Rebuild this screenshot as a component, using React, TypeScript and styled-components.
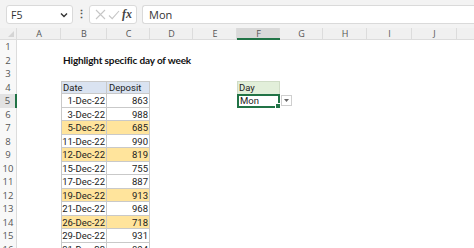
import React from 'react';
import styled, {createGlobalStyle} from 'styled-components';

const colors = {
    chrome: '#f3f3f3',
    boxBorder: '#dadada',
    headerBg: '#f0f0f0',
    headerText: '#555555',
    gridLine: '#dcdcdc',
    tableLine: '#c9c9c9',
    tableHead: '#dae3f1',
    highlight: '#ffe49c',
    dayHead: '#e2efda',
    green: '#217346',
    text: '#222222',
};

const GlobalStyle = createGlobalStyle`
  html, body {
    margin: 0;
    padding: 0;
    background: #ffffff;
  }
  body {
    font-family: "Roboto", "Liberation Sans", sans-serif;
    color: ${colors.text};
  }
`;

// the last column is only the start of K, which is cut off by the window
const columns = ['A', 'B', 'C', 'D', 'E', 'F', 'G', 'H', 'I', 'J', ''];
const colWidths = [44, 46, 43, 43, 44, 43, 43, 44, 45, 45, 60];

interface Deposit {
    date: string
    amount: number
    monday?: boolean
}

const deposits: Deposit[] = [
    {date: '1-Dec-22', amount: 863},
    {date: '3-Dec-22', amount: 988},
    {date: '5-Dec-22', amount: 685, monday: true},
    {date: '11-Dec-22', amount: 990},
    {date: '12-Dec-22', amount: 819, monday: true},
    {date: '15-Dec-22', amount: 755},
    {date: '17-Dec-22', amount: 887},
    {date: '19-Dec-22', amount: 913, monday: true},
    {date: '21-Dec-22', amount: 968},
    {date: '26-Dec-22', amount: 718, monday: true},
    {date: '29-Dec-22', amount: 931},
    {date: '31-Dec-22', amount: 804},
];

const ROW_COUNT = 16;

export default function App() {
    const rows = Array.from({length: ROW_COUNT}, (_, i) => i + 1);

    const renderCell = (row: number, colIndex: number) => {
        const key = `${row}-${colIndex}`;
        const col = columns[colIndex];

        if (row === 2 && col === 'B') {
            return <Cell key={key}><Title>Highlight specific day of week</Title></Cell>;
        }
        if (row === 4 && col === 'B') {
            return <TableCell key={key} head first>Date</TableCell>;
        }
        if (row === 4 && col === 'C') {
            return <TableCell key={key} head>Deposit</TableCell>;
        }
        if (row >= 5 && (col === 'B' || col === 'C')) {
            const d = deposits[row - 5];
            return (
                <TableCell key={key} first={col === 'B'} right highlight={d.monday}>
                    {col === 'B' ? d.date : d.amount}
                </TableCell>
            );
        }
        if (row === 4 && col === 'F') {
            return <DayHead key={key}>Day</DayHead>;
        }
        if (row === 5 && col === 'F') {
            return (
                <ActiveCell key={key}>
                    Mon
                    <FillHandle/>
                    <DropButton>
                        <svg width="5" height="3" viewBox="0 0 5 3"><path d="M0 0h5L2.5 3z" fill="#666"/></svg>
                    </DropButton>
                </ActiveCell>
            );
        }
        return <Cell key={key}/>;
    };

    return (
        <>
            <GlobalStyle/>
            <Window>
                <FormulaBar>
                    <NameBox>
                        <span>F5</span>
                        <svg width="8" height="6" viewBox="0 0 8 6">
                            <path d="M1 1.5l3 3 3-3" stroke="#333" strokeWidth="1.4" fill="none"/>
                        </svg>
                    </NameBox>
                    <Grip>⋮</Grip>
                    <FxBox>
                        <svg width="11" height="11" viewBox="0 0 11 11">
                            <path d="M1 1l9 9M10 1l-9 9" stroke="#c6c6c6" strokeWidth="1.1"/>
                        </svg>
                        <svg width="12" height="10" viewBox="0 0 12 10">
                            <path d="M1 5.5l3.2 3.2L11 1" stroke="#c6c6c6" strokeWidth="1.1" fill="none"/>
                        </svg>
                        <Fx>fx</Fx>
                    </FxBox>
                    <FormulaInput>Mon</FormulaInput>
                </FormulaBar>
                <Sheet>
                    <Corner/>
                    {columns.map((c, i) => (
                        <ColHeader key={i} active={c === 'F'} last={i === columns.length - 1}>{c}</ColHeader>
                    ))}
                    {rows.map(row => (
                        <React.Fragment key={row}>
                            <RowHeader active={row === 5}>{row}</RowHeader>
                            {columns.map((_, ci) => renderCell(row, ci))}
                        </React.Fragment>
                    ))}
                </Sheet>
            </Window>
        </>
    );
}

const Window = styled.div`
  width: 474px;
  height: 248px;
  overflow: hidden;
  background: #ffffff;
  display: flex;
  flex-direction: column;
`;

const FormulaBar = styled.div`
  height: 28px;
  box-sizing: border-box;
  padding: 5px 0 4px 6px;
  background: ${colors.chrome};
  display: flex;
  align-items: stretch;
  flex-shrink: 0;
`;

const BoxBase = styled.div`
  background: #ffffff;
  border: 1px solid ${colors.boxBorder};
  border-radius: 3px;
  box-sizing: border-box;
  display: flex;
  align-items: center;
  font-family: "Open Sans", "Liberation Sans", sans-serif;
  font-size: 10.5px;
  color: #333;
`;

const NameBox = styled(BoxBase)`
  width: 67px;
  padding: 0 4px 0 4px;
  justify-content: space-between;
`;

const Grip = styled.div`
  width: 16px;
  display: flex;
  align-items: center;
  justify-content: center;
  font-size: 11px;
  font-weight: bold;
  color: #555;
`;

const FxBox = styled(BoxBase)`
  width: 48px;
  padding: 0 4px 0 5px;
  justify-content: space-between;
`;

const Fx = styled.span`
  font-family: "Liberation Serif", serif;
  font-style: italic;
  font-weight: bold;
  font-size: 12px;
  color: #444;
`;

const FormulaInput = styled(BoxBase)`
  flex: 1;
  margin-left: 5px;
  padding-left: 6px;
  border-right: none;
  border-radius: 3px 0 0 3px;
  font-size: 11px;
`;

const Sheet = styled.div`
  display: grid;
  grid-template-columns: 17px ${colWidths.map(w => `${w}px`).join(' ')};
  grid-template-rows: 12px repeat(${ROW_COUNT}, 13.5px);
  font-family: "Roboto", "Liberation Sans", sans-serif;
  font-size: 9.5px;
  line-height: 13px;
`;

const Corner = styled.div`
  background: ${colors.headerBg};
  border-right: 1px solid ${colors.gridLine};
  border-bottom: 1px solid ${colors.gridLine};
  position: relative;
  &::after {
    content: '';
    position: absolute;
    right: 2px;
    bottom: 2px;
    border-left: 6px solid transparent;
    border-bottom: 6px solid #d4d4d4;
  }
`;

interface HeaderProps {
    active?: boolean
    last?: boolean
}

const ColHeader = styled.div<HeaderProps>`
  background: ${p => p.active ? '#d9d9d9' : colors.headerBg};
  border-bottom: ${p => p.active ? `2px solid ${colors.green}` : `1px solid ${colors.gridLine}`};
  box-shadow: ${p => p.last ? 'none' : `inset -1px 0 0 ${colors.gridLine}`};
  box-sizing: border-box;
  display: flex;
  align-items: center;
  justify-content: center;
  font-family: "Open Sans", "Liberation Sans", sans-serif;
  font-size: 9px;
  color: ${colors.headerText};
`;

const RowHeader = styled.div<HeaderProps>`
  background: ${p => p.active ? '#e2e2e2' : '#f8f8f8'};
  border-right: ${p => p.active ? `2px solid ${colors.green}` : `1px solid ${colors.gridLine}`};
  box-sizing: border-box;
  display: flex;
  align-items: center;
  justify-content: center;
  font-family: "Open Sans", "Liberation Sans", sans-serif;
  font-size: 9.5px;
  color: ${colors.headerText};
`;

const Cell = styled.div`
  position: relative;
  white-space: nowrap;
  display: flex;
  align-items: center;
  padding: 0 2px;
  min-width: 0;
`;

const Title = styled.span`
  font-family: "Lato", "Liberation Sans", sans-serif;
  font-weight: bold;
  font-size: 10px;
  letter-spacing: -0.15px;
  color: #111;
`;

interface TableCellProps {
    head?: boolean
    first?: boolean
    right?: boolean
    highlight?: boolean
}

const TableCell = styled(Cell)<TableCellProps>`
  background: ${p => p.head ? colors.tableHead : p.highlight ? colors.highlight : '#ffffff'};
  justify-content: ${p => p.right ? 'flex-end' : 'flex-start'};
  box-shadow: inset -1px -1px 0 ${colors.tableLine}
    ${p => p.first ? `, inset 1px 0 0 ${colors.tableLine}` : ''}
    ${p => p.head ? `, inset 0 1px 0 ${colors.tableLine}` : ''};
  padding: 0 2px 0 2px;
`;

const DayHead = styled(Cell)`
  background: ${colors.dayHead};
  box-shadow: inset -1px 0 0 #cfdcc6, inset 0 1px 0 #cfdcc6, inset 1px 0 0 #cfdcc6;
`;

const ActiveCell = styled(Cell)`
  border: 2px solid ${colors.green};
  box-sizing: border-box;
  padding: 0 1px;
`;

const FillHandle = styled.span`
  position: absolute;
  right: -3px;
  bottom: -3px;
  width: 4px;
  height: 4px;
  background: ${colors.green};
  border: 1px solid #ffffff;
`;

const DropButton = styled.span`
  position: absolute;
  left: calc(100% + 3px);
  top: -1px;
  width: 11px;
  height: 11px;
  box-sizing: border-box;
  border: 1px solid #cfcfcf;
  background: #ffffff;
  display: flex;
  align-items: center;
  justify-content: center;
`;
